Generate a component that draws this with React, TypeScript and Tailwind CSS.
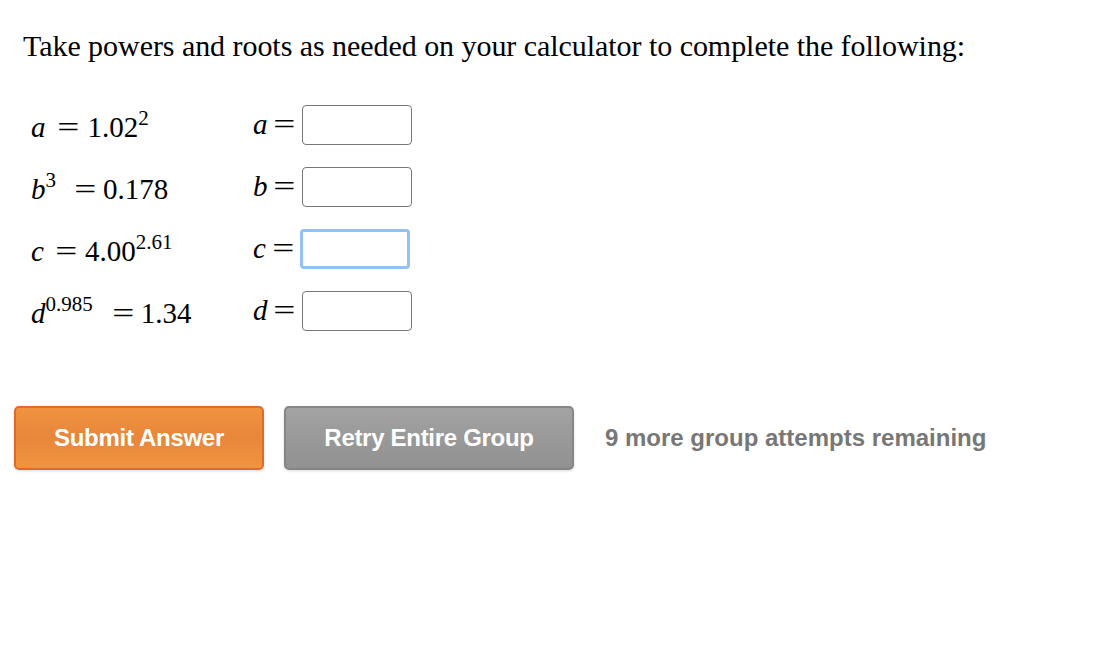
import React from 'react';

const serif = { fontFamily: '"Liberation Serif", "DejaVu Serif", serif' };

function V({ children }: { children: React.ReactNode }) {
  return <i className="italic">{children}</i>;
}

function Sup({ children }: { children: React.ReactNode }) {
  return <span className="relative -top-[12px] text-[21px]">{children}</span>;
}

// TeX-style equals sign: wider than the serif font's own glyph
function Eq({ className = '' }: { className?: string }) {
  return (
    <span className={`inline-block w-[22px] text-center ${className}`}>
      <span className="inline-block scale-x-[1.35]">=</span>
    </span>
  );
}

const rows = [
  { left: <><V>a</V><Eq className="ml-[12px] mr-[8px]" />1.02<Sup>2</Sup></>, v: 'a', focus: false },
  { left: <><V>b</V><Sup>3</Sup><Eq className="ml-[18px] mr-[7px]" />0.178</>, v: 'b', focus: false },
  { left: <><V>c</V><Eq className="ml-[11px] mr-[8px]" />4.00<Sup>2.61</Sup></>, v: 'c', focus: true },
  { left: <><V>d</V><Sup>0.985</Sup><Eq className="ml-[19px] mr-[7px]" />1.34</>, v: 'd', focus: false },
];

export default function App() {
  return (
    <div className="w-[1112px] h-[656px] bg-white text-black">
      <p className="pl-[23px] pt-[30px] text-[30px] leading-[32px] tracking-[-0.05px]" style={serif}>
        Take powers and roots as needed on your calculator to complete the following:
      </p>

      <div className="mt-[43px] pl-[31px] flex flex-col gap-[22px]" style={serif}>
        {rows.map((r) => (
          <div key={r.v} className="flex items-center h-[40px]">
            <div className="w-[222px] text-[29px] whitespace-nowrap pt-[6px]">{r.left}</div>
            <div className="flex items-center text-[29px]">
              <V>{r.v}</V>
              <Eq className="ml-[6px] mr-[6px] w-[20px]" />
              <input
                className={`w-[110px] h-[40px] rounded-[4px] bg-white outline-none ${
                  r.focus ? 'border-[3px] border-[#94c0f5]' : 'border border-[#777]'
                }`}
              />
            </div>
          </div>
        ))}
      </div>

      <div
        className="mt-[75px] pl-[14px] flex items-center"
        style={{ fontFamily: '"Liberation Sans", Arial, sans-serif' }}
      >
        <button className="w-[250px] h-[64px] rounded-[5px] border-2 border-[#de6a2c] bg-gradient-to-b from-[#f0923f] via-[#e8863a] to-[#f19340] text-white font-bold text-[24px] tracking-[-0.3px] shadow-[0_1px_3px_rgba(0,0,0,0.15)]">
          Submit Answer
        </button>
        <button className="ml-[20px] w-[290px] h-[64px] rounded-[5px] border-2 border-[#868686] bg-gradient-to-b from-[#a3a3a3] via-[#999] to-[#919191] text-white font-bold text-[24px] tracking-[-0.3px] shadow-[0_1px_3px_rgba(0,0,0,0.15)]">
          Retry Entire Group
        </button>
        <span className="ml-[31px] text-[24px] font-bold text-[#777]">9 more group attempts remaining</span>
      </div>
    </div>
  );
}
